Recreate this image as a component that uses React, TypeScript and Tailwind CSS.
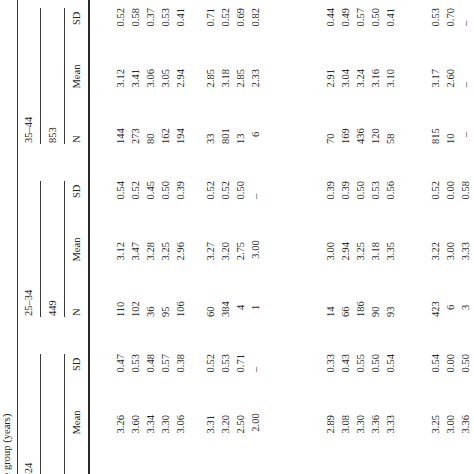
import React from "react";

type Cell = [string, string, string];
type DataRow = Cell[] | null;

const groups = ["18–24", "25–34", "35–44"];
const totals = ["", "449", "853"];

const g1: DataRow[] = [
  [["", "3.26", "0.47"], ["110", "3.12", "0.54"], ["144", "3.12", "0.52"]],
  [["", "3.60", "0.53"], ["102", "3.47", "0.52"], ["273", "3.41", "0.58"]],
  [["", "3.34", "0.48"], ["36", "3.28", "0.45"], ["80", "3.06", "0.37"]],
  [["", "3.30", "0.57"], ["95", "3.25", "0.50"], ["162", "3.05", "0.53"]],
  [["", "3.06", "0.38"], ["106", "2.96", "0.39"], ["194", "2.94", "0.41"]],
];
const g2: DataRow[] = [
  [["", "3.31", "0.52"], ["60", "3.27", "0.52"], ["33", "2.85", "0.71"]],
  [["", "3.20", "0.53"], ["384", "3.20", "0.52"], ["801", "3.18", "0.52"]],
  [["", "2.50", "0.71"], ["4", "2.75", "0.50"], ["13", "2.85", "0.69"]],
  [["", "2.00", "–"], ["1", "3.00", "–"], ["6", "2.33", "0.82"]],
];
const g3: DataRow[] = [
  [["", "2.89", "0.33"], ["14", "3.00", "0.39"], ["70", "2.91", "0.44"]],
  [["", "3.08", "0.43"], ["66", "2.94", "0.39"], ["169", "3.04", "0.49"]],
  [["", "3.30", "0.55"], ["186", "3.25", "0.50"], ["436", "3.24", "0.57"]],
  [["", "3.36", "0.50"], ["90", "3.18", "0.53"], ["120", "3.16", "0.50"]],
  [["", "3.33", "0.54"], ["93", "3.35", "0.56"], ["58", "3.10", "0.41"]],
];
const g4: DataRow[] = [
  [["", "3.25", "0.54"], ["423", "3.22", "0.52"], ["815", "3.17", "0.53"]],
  [["", "3.00", "0.00"], ["6", "3.00", "0.00"], ["10", "2.60", "0.70"]],
  [["", "3.36", "0.50"], ["3", "3.33", "0.58"], ["–", "–", "–"]],
];

const rows: DataRow[] = [
  ...g1,
  null,
  ...g2,
  null,
  null,
  null,
  null,
  ...g3,
  null,
  null,
  ...g4,
];

function GroupCells({ cell }: { cell: Cell }) {
  const [n, mean, sd] = cell;
  return (
    <div className="w-[136px] flex">
      <div className={"w-[40px] " + (n.length === 1 ? "pl-[7px]" : "pl-0")}>{n}</div>
      <div className="w-[55px] text-center">
        {mean === "–" ? <span className="pr-[16px]">–</span> : mean}
      </div>
      <div className={"flex-1 " + (sd === "–" ? "pl-[23px]" : "pl-[25px]")}>{sd}</div>
    </div>
  );
}

export default function App() {
  return (
    <div className="w-[474px] h-[474px] overflow-hidden bg-white">
      <div className="w-[474px] h-[474px] -rotate-90">
        <div
          className="ml-[-16px] w-[494px] text-[10.5px] text-[#262626]"
          style={{ fontFamily: '"Liberation Serif", "Times New Roman", serif' }}
        >
          <div className="h-[14px] leading-[14px] whitespace-nowrap">Age group (years)</div>
          <div className="mt-[3px] h-px bg-[#3a3a3a]" />
          <div className="flex gap-[37px]">
            {groups.map((g, i) => (
              <div key={i} className="w-[136px]">
                <div className="h-[22px] leading-[22px] pl-px">{g}</div>
                <div className="h-px bg-[#3a3a3a]" />
                <div className="h-[23px] leading-[23px] pl-px">{totals[i]}</div>
                <div className="h-px bg-[#3a3a3a]" />
                <div className="h-[23px] leading-[23px] flex">
                  <div className="w-[40px] pl-px">N</div>
                  <div className="w-[55px] text-center">Mean</div>
                  <div className="flex-1 pl-[24px]">SD</div>
                </div>
              </div>
            ))}
          </div>
          <div className="h-[2px] bg-[#2a2a2a]" />
          <div className="h-[23px]" />
          {rows.map((r, i) => (
            <div key={i} className="h-[15px] leading-[15px] flex gap-[37px] whitespace-nowrap">
              {r ? r.map((c, j) => <GroupCells key={j} cell={c} />) : null}
            </div>
          ))}
        </div>
      </div>
    </div>
  );
}
